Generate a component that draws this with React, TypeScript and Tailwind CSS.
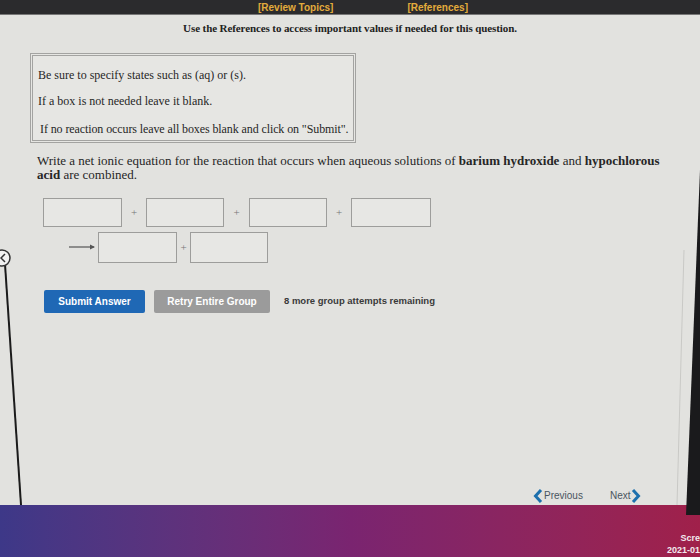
import React from 'react';

const Box = ({ w }: { w: string }) => (
  <div className={`${w} h-full border border-[#9d9d9b] bg-[#e7e7e4]`} />
);

const Plus = () => <span className="text-[11px] text-[#777] leading-none">+</span>;

export default function App() {
  return (
    <div className="relative w-[700px] h-[557px] overflow-hidden bg-[#e2e2df] font-['Liberation_Serif',serif] text-[#2a2a2a]">
      {/* top bar */}
      <div className="h-[15px] bg-[#2b2b2d] border-b border-[#777] flex items-center pl-[258px] gap-[74px] font-['Liberation_Sans',sans-serif] text-[10px] font-bold text-[#e3ab3c]">
        <span>[Review Topics]</span>
        <span>[References]</span>
      </div>

      <p className="mt-[5px] text-center text-[11px] font-bold tracking-[-0.1px] text-[#222]">
        Use the References to access important values if needed for this question.
      </p>

      {/* instructions */}
      <div className="ml-[30px] mt-[16px] w-[326px] h-[90px] border-[3px] border-double border-[#a3a3a1] bg-[#e6e6e3] pl-[5px] pt-[6px] text-[12px] leading-none text-[#262626]">
        <p className="h-[26px] flex items-center">Be sure to specify states such as (aq) or (s).</p>
        <p className="h-[26px] flex items-center">If a box is not needed leave it blank.</p>
        <p className="h-[30px] flex items-center pl-[2px] whitespace-nowrap tracking-[-0.1px]">If no reaction occurs leave all boxes blank and click on "Submit".</p>
      </div>

      {/* question */}
      <p className="ml-[37px] mt-[11px] w-[626px] text-[13px] leading-[14px] text-[#262626]">
        Write a net ionic equation for the reaction that occurs when aqueous solutions of <b>barium hydroxide</b> and <b>hypochlorous</b> <b>acid</b> are combined.
      </p>

      {/* equation */}
      <div className="ml-[43px] mt-[16px] flex items-center h-[29px]">
        <Box w="w-[79px]" />
        <div className="w-[24px] flex justify-center"><Plus /></div>
        <Box w="w-[78px]" />
        <div className="w-[25px] flex justify-center"><Plus /></div>
        <Box w="w-[78px]" />
        <div className="w-[24px] flex justify-center"><Plus /></div>
        <Box w="w-[80px]" />
      </div>
      <div className="ml-[69px] mt-[5px] flex items-center h-[31px]">
        <svg width="28" height="8" viewBox="0 0 28 8" className="mr-[1px]">
          <line x1="0" y1="4" x2="25" y2="4" stroke="#555" strokeWidth="1.2" />
          <path d="M21 1.5 L26 4 L21 6.5 Z" fill="#555" />
        </svg>
        <Box w="w-[79px]" />
        <div className="w-[13px] flex justify-center"><Plus /></div>
        <Box w="w-[78px]" />
      </div>

      {/* buttons */}
      <div className="ml-[44px] mt-[27px] flex items-center font-['Liberation_Sans',sans-serif] text-[10px] font-bold">
        <button className="w-[101px] h-[23px] rounded-[2px] bg-[#1f68b5] text-white">Submit Answer</button>
        <button className="ml-[9px] w-[116px] h-[23px] rounded-[2px] bg-[#9b9b9b] text-white">Retry Entire Group</button>
        <span className="ml-[14px] text-[9.5px] text-[#3a3a3a]">8 more group attempts remaining</span>
      </div>

      {/* prev / next */}
      <div className="absolute left-[533px] top-[488px] flex items-center font-['Liberation_Sans',sans-serif] text-[10px] text-[#4a5560]">
        <svg width="10" height="14" viewBox="0 0 10 14">
          <path d="M8 1 L2.5 7 L8 13" fill="none" stroke="#1d70ad" strokeWidth="3" />
        </svg>
        <span className="ml-[1px]">Previous</span>
        <span className="ml-[27px]">Next</span>
        <svg width="10" height="14" viewBox="0 0 10 14" className="ml-[1px]">
          <path d="M2 1 L7.5 7 L2 13" fill="none" stroke="#1d70ad" strokeWidth="3" />
        </svg>
      </div>

      {/* bottom wallpaper */}
      <div className="absolute left-0 right-0 top-[505px] h-[52px] bg-gradient-to-r from-[#3d3888] via-[#7a2470] to-[#a0204a]">
        <div className="absolute right-0 top-[27px] text-right font-['Liberation_Sans',sans-serif] text-[9px] font-bold leading-[12px] text-[#f2e8ee]">
          <div>Scre</div>
          <div>2021-01</div>
        </div>
      </div>

      {/* screen bezel overlays */}
      <svg className="absolute inset-0 pointer-events-none" width="700" height="557" viewBox="0 0 700 557">
        <line x1="5" y1="264" x2="21" y2="505" stroke="#1b1b1b" strokeWidth="2" />
        <polygon points="700,170 700,515 686,515" fill="#1a1a1c" />
        <line x1="684" y1="250" x2="677" y2="505" stroke="#c9c9c6" strokeWidth="1" />
        <circle cx="2" cy="258" r="8" fill="#f2f2f2" stroke="#333" strokeWidth="1.5" />
        <path d="M5 254 L1 258 L5 262" fill="none" stroke="#333" strokeWidth="1.5" />
      </svg>
    </div>
  );
}
